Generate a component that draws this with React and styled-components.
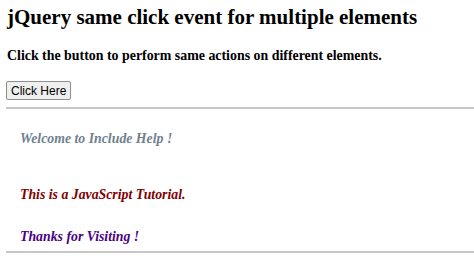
import styled, { createGlobalStyle } from "styled-components";

const GlobalStyle = createGlobalStyle`
  body {
    margin: 0;
    background: #fff;
    font-family: "Liberation Serif", "Times New Roman", serif;
    color: #000;
  }
`;

const Page = styled.div`
  padding: 5px 0 0 7px;
`;

const Title = styled.h2`
  margin: 0;
  font-size: 21px;
  font-weight: bold;
  line-height: 24px;
`;

const Subtitle = styled.h4`
  margin: 18px 0 0;
  font-size: 13.9px;
  font-weight: bold;
  line-height: 17px;
`;

const Button = styled.button`
  margin: 17px 0 0 -1px;
  padding: 0 4px;
  height: 19px;
  font-family: "Liberation Sans", Arial, sans-serif;
  font-size: 12px;
  line-height: 14px;
  color: #000;
  background: #efefef;
  border: 1px solid #8f8f8f;
  border-radius: 2px;
`;

const Rule = styled.hr`
  margin: ${(p) => p.$top}px 0 0 -1px;
  border: none;
  border-top: 2px solid #c8c8c8;
`;

const Messages = styled.div`
  padding: 22px 0 0 13px;
  display: flex;
  flex-direction: column;
`;

const Message = styled.p`
  margin: 0 0 ${(p) => p.$gap}px;
  font-size: 13.8px;
  line-height: 16px;
  font-weight: bold;
  font-style: italic;
  color: ${(p) => p.$color};
`;

const App = () => {
  return (
    <>
      <GlobalStyle />
      <Page>
        <Title>jQuery same click event for multiple elements</Title>
        <Subtitle>Click the button to perform same actions on different elements.</Subtitle>
        <Button>Click Here</Button>
        <Rule $top={7} />
        <Messages>
          <Message $color="#708090" $gap={40}>Welcome to Include Help !</Message>
          <Message $color="#800000" $gap={26}>This is a JavaScript Tutorial.</Message>
          <Message $color="#4b0082" $gap={0}>Thanks for Visiting !</Message>
        </Messages>
        <Rule $top={6} />
      </Page>
    </>
  );
};

export default App;
